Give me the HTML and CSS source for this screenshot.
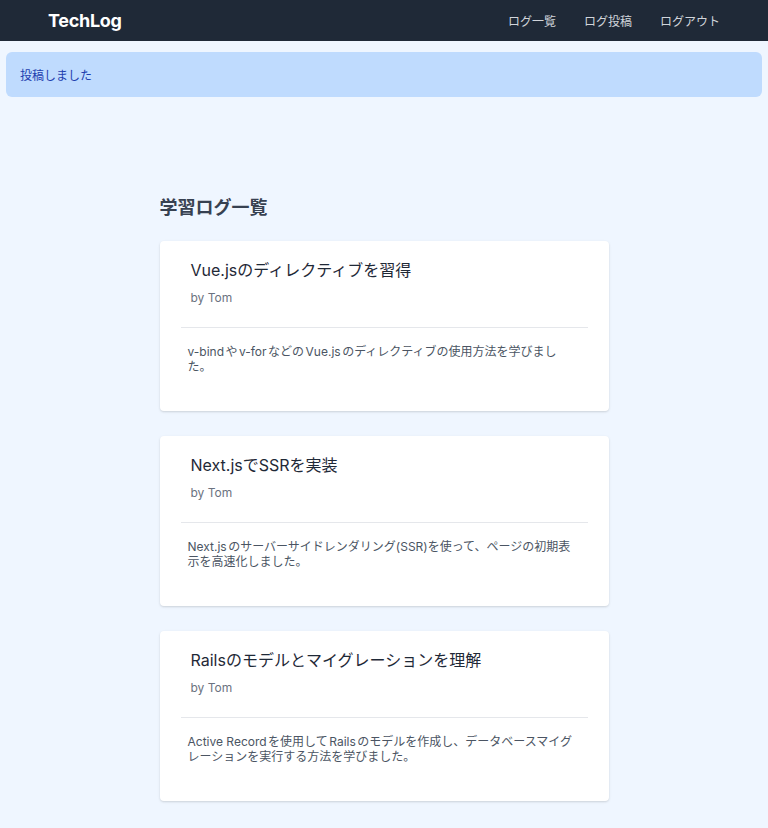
FILE: index.html
```html
<!DOCTYPE html>
<html lang="ja">
<head>
<meta charset="utf-8">
<title>TechLog</title>
<link rel="stylesheet" href="styles.css">
</head>
<body>
<header class="topbar">
  <a class="brand" href="#">TechLog</a>
  <nav class="nav">
    <a href="#">ログ一覧</a>
    <a href="#">ログ投稿</a>
    <a href="#">ログアウト</a>
  </nav>
</header>
<div class="flash">投稿しました</div>
<main class="main">
  <h1 class="page-title">学習ログ一覧</h1>
  <article class="card">
    <div class="card-head">
      <h2 class="card-title">Vue.jsのディレクティブを習得</h2>
      <p class="card-author">by Tom</p>
    </div>
    <hr class="divider">
    <p class="card-body">v-bindやv-forなどのVue.jsのディレクティブの使用方法を学びました。</p>
  </article>
  <article class="card">
    <div class="card-head">
      <h2 class="card-title">Next.jsでSSRを実装</h2>
      <p class="card-author">by Tom</p>
    </div>
    <hr class="divider">
    <p class="card-body">Next.jsのサーバーサイドレンダリング(SSR)を使って、ページの初期表示を高速化しました。</p>
  </article>
  <article class="card">
    <div class="card-head">
      <h2 class="card-title">Railsのモデルとマイグレーションを理解</h2>
      <p class="card-author">by Tom</p>
    </div>
    <hr class="divider">
    <p class="card-body">Active Recordを使用してRailsのモデルを作成し、データベースマイグレーションを実行する方法を学びました。</p>
  </article>
</main>
</body>
</html>
```

FILE: styles.css
```css
* { box-sizing: border-box; }
html, body { margin: 0; padding: 0; }
body {
  background: #eff6ff;
  font-family: Inter, "Noto Sans CJK JP", sans-serif;
  color: #374151;
}
.topbar {
  height: 41px;
  background: #1f2937;
  display: flex;
  align-items: center;
  justify-content: space-between;
  padding: 0 48px;
}
.brand {
  color: #ffffff;
  font-weight: 700;
  font-size: 18px;
  text-decoration: none;
  letter-spacing: -0.3px;
}
.nav { display: flex; gap: 28px; }
.nav a {
  color: #d1d5db;
  font-size: 12px;
  text-decoration: none;
}
.flash {
  margin: 11px 6px 0;
  height: 45px;
  background: #bfdbfe;
  border-radius: 6px;
  color: #1e40af;
  font-size: 12px;
  display: flex;
  align-items: center;
  padding: 0 14px;
}
.main {
  width: 449px;
  margin: 0 auto;
  padding-top: 99px;
}
.page-title {
  margin: 0 0 21px;
  font-size: 18px;
  line-height: 24px;
  font-weight: 700;
  color: #374151;
}
.card {
  background: #ffffff;
  border-radius: 4px;
  box-shadow: 0 1px 3px rgba(0,0,0,0.1), 0 1px 2px rgba(0,0,0,0.06);
  padding: 19px 21px 37px;
  margin-bottom: 25px;
}
.card-head { padding: 0 10px; }
.card-title {
  margin: 0;
  font-size: 16px;
  line-height: 20px;
  font-weight: 400;
  color: #1f2937;
}
.card-author {
  margin: 8px 0 0;
  font-size: 12px;
  line-height: 20px;
  color: #6b7280;
}
.divider {
  border: 0;
  border-top: 1px solid #e5e7eb;
  margin: 19px 0 16px;
}
.card-body {
  margin: 0;
  padding: 0 8px 0 7px;
  font-size: 12px;
  line-height: 15px;
  color: #4b5563;
  text-autospace: normal;
  text-spacing-trim: space-all;
}
```
